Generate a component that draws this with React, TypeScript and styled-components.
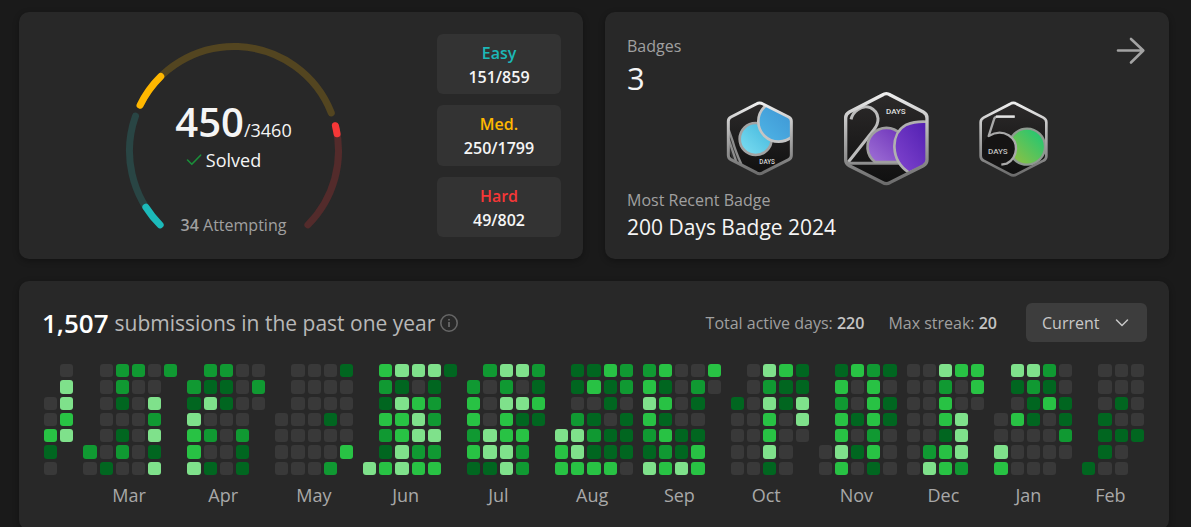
import React from "react";
import styled, { createGlobalStyle } from "styled-components";

const GlobalStyle = createGlobalStyle`
  *, *::before, *::after { box-sizing: border-box; }
  body {
    margin: 0;
    background: #1a1a1a;
    color: #f5f5f5;
    font-family: "Open Sans", "Noto Sans", sans-serif;
    font-size: 16px;
    scrollbar-width: none;
  }
  html { scrollbar-width: none; }
`;

const Page = styled.main`
  display: grid;
  grid-template-columns: 1fr 1fr;
  gap: 22px;
  padding: 12px 22px 22px 19px;
`;

const Card = styled.section<{ $wide?: boolean }>`
  grid-column: ${(p) => (p.$wide ? "1 / -1" : "auto")};
  min-width: 0;
  padding: 22px;
  border-radius: 10px;
  background: #282828;
  box-shadow: 0 2px 6px rgba(0, 0, 0, 0.3);
`;

/* Solved problems */

const SolvedCard = styled(Card)`
  display: flex;
  gap: 11px;
`;

const Gauge = styled.div`
  flex: 1;
  display: grid;
  justify-items: center;
  align-items: start;
`;

const GaugeSvg = styled.svg`
  grid-area: 1 / 1;
  width: 220px;
  height: 203px;
`;

const GaugeText = styled.div`
  grid-area: 1 / 1;
  align-self: stretch;
  display: flex;
  flex-direction: column;
  align-items: center;
  padding-top: 70px;
`;

const Total = styled.div`
  font-size: 18px;
  line-height: 36px;
  strong {
    font-size: 40px;
    font-weight: 600;
  }
`;

const Solved = styled.div`
  display: flex;
  align-items: center;
  gap: 4px;
  font-size: 18px;
  line-height: 24px;
  padding-right: 20px;
`;

const Attempting = styled.div`
  margin-top: auto;
  font-size: 16px;
  line-height: 24px;
  color: #a0a0a0;
  strong { font-weight: 600; }
`;

const StatList = styled.div`
  display: flex;
  flex-direction: column;
  justify-content: space-between;
  gap: 11px;
  width: 124px;
`;

const Stat = styled.div`
  flex: 1;
  display: flex;
  flex-direction: column;
  align-items: center;
  justify-content: center;
  padding-top: 2px;
  border-radius: 6px;
  background: #333333;
  font-size: 16px;
  line-height: 24px;
  font-weight: 600;
`;

const StatName = styled.span<{ $color: string }>`
  color: ${(p) => p.$color};
`;

/* Badges */

const BadgeCard = styled(Card)`
  display: flex;
  flex-direction: column;
  padding-bottom: 17px;
`;

const BadgeHead = styled.div`
  display: flex;
  justify-content: space-between;
  align-items: flex-start;
`;

const Muted = styled.div`
  font-size: 16px;
  line-height: 24px;
  color: #a0a0a0;
`;

const BadgeCount = styled.div`
  font-size: 31px;
  line-height: 36px;
  margin-top: 2px;
`;

const ArrowLink = styled.a`
  display: flex;
  padding: 2px 0;
  color: #a3a3a3;
`;

const BadgeRow = styled.div`
  display: flex;
  justify-content: center;
  align-items: center;
  gap: 49px;
  margin: -5px 0 2px;
`;

const BadgeLabel = styled.text<{ $size: number }>`
  font-family: "Liberation Sans Narrow", Roboto, sans-serif;
  font-size: ${(p) => p.$size}px;
  font-weight: 500;
`;

const RecentName = styled.div`
  font-size: 21px;
  line-height: 30px;
`;

/* Submissions */

const CalendarHead = styled.header`
  display: flex;
  align-items: center;
  justify-content: space-between;
`;

const Heading = styled.h2`
  display: flex;
  align-items: center;
  margin: 0;
  padding-left: 1px;
  font-size: 21px;
  line-height: 36px;
  font-weight: 400;
  color: #b8b8b8;
  strong {
    margin-right: 6px;
    font-size: 26px;
    font-weight: 600;
    color: #ffffff;
  }
  svg { margin-left: 4px; }
`;

const HeadInfo = styled.div`
  display: flex;
  align-items: center;
  gap: 24px;
  font-size: 16px;
  line-height: 24px;
  color: #a0a0a0;
  strong {
    font-weight: 600;
    color: #c4c4c4;
  }
`;

const SelectBox = styled.label`
  display: grid;
  align-items: center;
  margin-left: 5px;
  svg {
    grid-area: 1 / 1;
    justify-self: end;
    margin-right: 18px;
    pointer-events: none;
  }
`;

const Select = styled.select`
  grid-area: 1 / 1;
  appearance: none;
  width: 121px;
  height: 39px;
  padding: 0 16px;
  border: 0;
  border-radius: 6px;
  background: #3d3d3d;
  color: #c8c8c8;
  font: inherit;
`;

const Calendar = styled.div`
  display: flex;
  gap: 10px;
  padding: 22px 3px 0;
`;

const Month = styled.div<{ $weeks: number }>`
  flex: ${(p) => p.$weeks} 1 ${(p) => (p.$weeks - 1) * 3}px;
  min-width: 0;
  display: flex;
  flex-direction: column;
  gap: 7px;
`;

const Days = styled.div<{ $weeks: number }>`
  display: grid;
  grid-auto-flow: column;
  grid-template-rows: repeat(7, 1fr);
  grid-template-columns: repeat(${(p) => p.$weeks}, 1fr);
  gap: 3px;
  height: 111px;
`;

const levels = ["#393939", "#016620", "#109932", "#28c244", "#7fe18b"];

const Day = styled.span<{ $level: number }>`
  border-radius: 3px;
  background: ${(p) => (p.$level < 0 ? "transparent" : levels[p.$level])};
`;

const MonthName = styled.div`
  align-self: center;
  width: 36px;
  font-size: 18px;
  line-height: 26px;
  color: #a8a8a8;
  white-space: nowrap;
`;

const months: { name: string; weeks: string[] }[] = [
  { name: "", weeks: ["..00310", "04434.."] },
  { name: "Mar", weeks: [".....20", "0000001", "2210120", "2000000", "0042414", "2......"] },
  { name: "Apr", weeks: [".214334", "2140201", "2110000", "0000211", "020...."] },
  { name: "May", weeks: ["...0000", "0000000", "0000000", "0001002", "100003."] },
  { name: "Jun", weeks: ["......4", "3213213", "4143344", "4034423", "4122423", "1......"] },
  { name: "Jul", weeks: [".233231", "2000441", "4243344", "4041322", "2131..."] },
  { name: "Aug", weeks: ["....433", "1102443", "1301213", "3110113", "2201110"] },
  { name: "Sep", weeks: ["2343214", "3131323", "0000114", "0210133", "30....."] },
  { name: "Oct", weeks: ["..10000", "0000000", "4243341", "3110000", "11440.."] },
  { name: "Nov", weeks: [".....00", "1323343", "3001010", "2333231", "1011000"] },
  { name: "Dec", weeks: ["0000000", "0000024", "4233133", "3004442", "330...."] },
  { name: "Jan", weeks: ["...0043", "4103000", "4211000", "2130000", "001120."] },
  { name: "Feb", weeks: ["......1", "0001110", "0010100", "00001.."] },
];

/* Arc of the gauge between two angles, in degrees clockwise from east */
function arc(from: number, to: number) {
  const point = (deg: number) => {
    const a = (deg * Math.PI) / 180;
    return `${(110 + 104.5 * Math.cos(a)).toFixed(2)} ${(117 + 104.5 * Math.sin(a)).toFixed(2)}`;
  };
  return `M${point(from)} A104.5 104.5 0 0 1 ${point(to)}`;
}

const arcs: [number, number, string][] = [
  [135, 199.5, "#294544"],
  [135, 147.5, "#1cbaba"],
  [206, 338.6, "#534520"],
  [206, 225.5, "#ffb700"],
  [346, 405, "#532b2b"],
  [346, 350.5, "#f63737"],
];

function Ring() {
  return (
    <GaugeSvg viewBox="0 0 220 203" fill="none" strokeWidth="7" strokeLinecap="round" aria-hidden="true">
      {arcs.map(([from, to, color]) => (
        <path key={color} d={arc(from, to)} stroke={color} />
      ))}
    </GaugeSvg>
  );
}

function BadgeDefs({ id, c1, c2, c3, c4 }: { id: string; c1: string; c2: string; c3: string; c4: string }) {
  return (
    <defs>
      <linearGradient id={`${id}m`} x1="0" y1="0" x2="0" y2="1">
        <stop offset="0" stopColor="#eeeeee" />
        <stop offset="0.5" stopColor="#a8a8a8" />
        <stop offset="1" stopColor="#6c6c6c" />
      </linearGradient>
      <linearGradient id={`${id}b`} x1="0" y1="0" x2="0" y2="1">
        <stop offset="0" stopColor="#2c2a2a" />
        <stop offset="1" stopColor="#101010" />
      </linearGradient>
      <linearGradient id={`${id}p`} x1="0" y1="1" x2="1" y2="0">
        <stop offset="0" stopColor={c1} />
        <stop offset="1" stopColor={c2} />
      </linearGradient>
      <linearGradient id={`${id}q`} x1="0" y1="1" x2="1" y2="0">
        <stop offset="0" stopColor={c3} />
        <stop offset="1" stopColor={c4} />
      </linearGradient>
    </defs>
  );
}

function Badge100() {
  const hex = "M111 57 Q121 51 131 57 L208 96 Q216 100 216 109 V211 Q216 220 208 224 L131 263 Q121 269 111 263 L35 224 Q27 220 27 211 V109 Q27 100 35 96Z";
  return (
    <svg width="68" height="75" viewBox="20 48 204 225" fill="none" role="img" aria-label="100 Days Badge">
      <BadgeDefs id="a" c1="#7fe0f2" c2="#3fb4dc" c3="#4fb5e6" c4="#3a8fd0" />
      <clipPath id="ac"><path d={hex} /></clipPath>
      <path d={hex} fill="url(#ab)" />
      <g clipPath="url(#ac)">
        <path d="M27 132 L45 180 L54 216 L66 240 L40 228 L28 190Z" fill="#333333" />
        <path d="M28 134 L40 168 Q48 198 66 238 M28 162 L50 228" stroke="#8c8c8c" strokeWidth="7" />
        <circle cx="109" cy="162" r="48" fill="url(#ap)" stroke="#a2a2a2" strokeWidth="8" />
        <circle cx="178" cy="109" r="61" fill="url(#aq)" stroke="#c4c4c4" strokeWidth="8" />
      </g>
      <path d={hex} stroke="url(#am)" strokeWidth="9" />
      <BadgeLabel x="120" y="237" fill="#d8d8d8" $size={19}>DAYS</BadgeLabel>
    </svg>
  );
}

function Badge200() {
  const hex = "M488 29 Q500 21 512 29 L611 80 Q622 86 622 98 V223 Q622 235 611 241 L512 291 Q500 299 488 291 L389 241 Q378 235 378 223 V98 Q378 86 389 80Z";
  return (
    <svg width="87" height="95" viewBox="370 17 261 285" fill="none" role="img" aria-label="200 Days Badge">
      <BadgeDefs id="b" c1="#a071d6" c2="#6a2fb8" c3="#8246cf" c4="#4f1db0" />
      <clipPath id="bc"><path d={hex} /></clipPath>
      <path d={hex} fill="url(#bb)" />
      <path d="M394 102 Q398 84 414 73 Q432 60 452 67 Q473 77 475 99 Q476 116 462 134 L386 230" stroke="#bcbcbc" strokeWidth="9" />
      <path d="M382 234 H540" stroke="#8e8e8e" strokeWidth="9" />
      <g clipPath="url(#bc)">
        <path d="M466 230 A57 57 0 1 1 535 230Z" fill="url(#bp)" stroke="#9e9e9e" strokeWidth="8" />
        <path d="M630 110 Q590 106 560 118 C510 145 512 225 568 262 L630 235Z" fill="url(#bq)" stroke="#b0b0b0" strokeWidth="8" />
      </g>
      <path d={hex} stroke="url(#bm)" strokeWidth="10" />
      <BadgeLabel x="499" y="86" fill="#e0e0e0" $size={24}>DAYS</BadgeLabel>
    </svg>
  );
}

function Badge50() {
  const hex = "M136 235 Q146 228 156 235 L236 276 Q245 281 245 290 V391 Q245 401 236 405 L156 446 Q146 452 136 446 L57 405 Q48 401 48 391 V290 Q48 281 57 276Z";
  return (
    <svg width="69" height="76" viewBox="43 226 207 228" fill="none" role="img" aria-label="50 Days Badge">
      <BadgeDefs id="c" c1="#9bbf3e" c2="#14c878" c3="#000000" c4="#000000" />
      <clipPath id="cc"><path d={hex} /></clipPath>
      <path d={hex} fill="url(#cb)" />
      <g clipPath="url(#cc)">
        <circle cx="187" cy="363" r="54" fill="url(#cp)" stroke="#8e9a90" strokeWidth="7" />
        <circle cx="104" cy="368" r="50" fill="#151414" />
        <path d="M150 273 H98 Q90 273 88 281 L72 331 Q104 312 132 329 Q155 344 154 370 Q152 401 126 414 L110 417" stroke="#a9a9a9" strokeWidth="7" strokeLinejoin="round" />
        <path d="M94 273 H150" stroke="#e2e2e2" strokeWidth="7" />
      </g>
      <path d={hex} stroke="url(#cm)" strokeWidth="8" />
      <BadgeLabel x="70" y="385" fill="#c4c4c4" $size={24}>DAYS</BadgeLabel>
    </svg>
  );
}

const stats = [
  { name: "Easy", color: "#1cb8b8", value: "151/859" },
  { name: "Med.", color: "#ffb700", value: "250/1799" },
  { name: "Hard", color: "#f63737", value: "49/802" },
];

export default function App() {
  return (
    <>
      <GlobalStyle />
      <Page>
        <SolvedCard>
          <Gauge>
            <Ring />
            <GaugeText>
              <Total><strong>450</strong>/3460</Total>
              <Solved>
                <svg width="16" height="14" viewBox="0 0 16 14" fill="none" stroke="#1a8f3a" strokeWidth="1.6" strokeLinecap="round" strokeLinejoin="round" aria-hidden="true">
                  <path d="M1.5 7 L5.8 11.3 L14.6 2.2" />
                </svg>
                Solved
              </Solved>
              <Attempting><strong>34</strong> Attempting</Attempting>
            </GaugeText>
          </Gauge>
          <StatList>
            {stats.map((s) => (
              <Stat key={s.name}>
                <StatName $color={s.color}>{s.name}</StatName>
                <span>{s.value}</span>
              </Stat>
            ))}
          </StatList>
        </SolvedCard>

        <BadgeCard>
          <BadgeHead>
            <div>
              <Muted>Badges</Muted>
              <BadgeCount>3</BadgeCount>
            </div>
            <ArrowLink href="#badges" aria-label="All badges">
              <svg width="33" height="29" viewBox="0 0 33 29" fill="none" stroke="currentColor" strokeWidth="2.6" strokeLinecap="round" strokeLinejoin="round" aria-hidden="true">
                <path d="M4 14.5 H29 M17 3 L29.3 14.5 L17 26.5" />
              </svg>
            </ArrowLink>
          </BadgeHead>
          <BadgeRow>
            <Badge100 />
            <Badge200 />
            <Badge50 />
          </BadgeRow>
          <Muted>Most Recent Badge</Muted>
          <RecentName>200 Days Badge 2024</RecentName>
        </BadgeCard>

        <Card $wide>
          <CalendarHead>
            <Heading>
              <strong>1,507</strong>submissions in the past one year
              <svg width="20" height="20" viewBox="0 0 20 20" fill="none" stroke="#666666" strokeWidth="1.6" aria-hidden="true">
                <circle cx="10" cy="10" r="8.2" />
                <path d="M10 9 V14 M10 6 V7.6" strokeWidth="1.8" />
              </svg>
            </Heading>
            <HeadInfo>
              <span>Total active days: <strong>220</strong></span>
              <span>Max streak: <strong>20</strong></span>
              <SelectBox>
                <Select aria-label="Year" defaultValue="Current">
                  <option>Current</option>
                </Select>
                <svg width="14" height="10" viewBox="0 0 14 10" fill="none" stroke="#c8c8c8" strokeWidth="1.5" strokeLinecap="round" strokeLinejoin="round" aria-hidden="true">
                  <path d="M1.5 2 L7 7.5 L12.5 2" />
                </svg>
              </SelectBox>
            </HeadInfo>
          </CalendarHead>
          <Calendar>
            {months.map((m) => (
              <Month key={m.name} $weeks={m.weeks.length}>
                <Days $weeks={m.weeks.length}>
                  {m.weeks.flatMap((week, w) =>
                    [...week].map((d, i) => <Day key={`${w}-${i}`} $level={d === "." ? -1 : Number(d)} />)
                  )}
                </Days>
                {m.name && <MonthName>{m.name}</MonthName>}
              </Month>
            ))}
          </Calendar>
        </Card>
      </Page>
    </>
  );
}
